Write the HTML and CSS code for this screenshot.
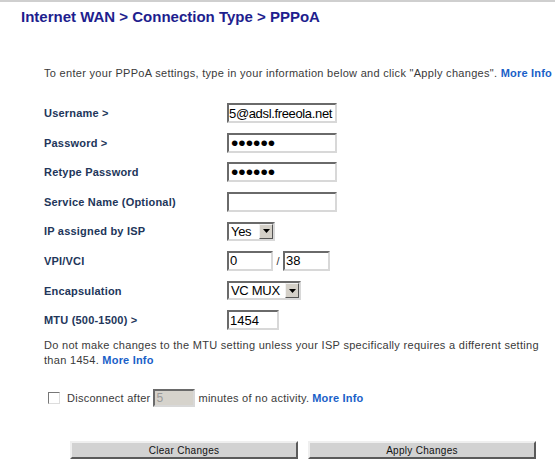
FILE: index.html
```html
<!DOCTYPE html>
<html>
<head>
<meta charset="utf-8">
<title>Internet WAN &gt; Connection Type &gt; PPPoA</title>
<link rel="stylesheet" href="styles.css">
</head>
<body>
<div class="page">
  <h1 class="title">Internet WAN &gt; Connection Type &gt; PPPoA</h1>
  <div class="content">
    <p class="intro">To enter your PPPoA settings, type in your information below and click "Apply changes". <a class="more" href="#">More Info</a></p>
    <div class="form">
      <label class="lbl">Username &gt;</label>
      <div class="ctl"><input class="field w110 user" type="text" value="5@adsl.freeola.net"></div>

      <label class="lbl">Password &gt;</label>
      <div class="ctl"><input class="field w110 pw" type="password" value="secret"></div>

      <label class="lbl">Retype Password</label>
      <div class="ctl"><input class="field w110 pw" type="password" value="secret"></div>

      <label class="lbl">Service Name (Optional)</label>
      <div class="ctl"><input class="field w110" type="text" value=""></div>

      <label class="lbl">IP assigned by ISP</label>
      <div class="ctl">
        <span class="sel w48"><span class="sel-text">Yes</span><span class="sel-btn"><svg width="7" height="4" viewBox="0 0 7 4"><path d="M0 0H7L3.5 4Z" fill="#000"/></svg></span></span>
      </div>

      <label class="lbl">VPI/VCI</label>
      <div class="ctl">
        <input class="field w46" type="text" value="0"><span class="slash">/</span><input class="field w47" type="text" value="38">
      </div>

      <label class="lbl">Encapsulation</label>
      <div class="ctl">
        <span class="sel w74"><span class="sel-text">VC MUX</span><span class="sel-btn"><svg width="7" height="4" viewBox="0 0 7 4"><path d="M0 0H7L3.5 4Z" fill="#000"/></svg></span></span>
      </div>

      <label class="lbl">MTU (500-1500) &gt;</label>
      <div class="ctl"><input class="field w52" type="text" value="1454"></div>
    </div>

    <p class="note">Do not make changes to the MTU setting unless your ISP specifically requires a different setting than 1454. <a class="more" href="#">More Info</a></p>

    <div class="idle">
      <input class="chk" type="checkbox">
      <span>Disconnect after</span>
      <input class="field w42 dis" type="text" value="5" disabled>
      <span>minutes of no activity.</span>
      <a class="more" href="#">More Info</a>
    </div>

    <div class="buttons">
      <button class="btn" type="button">Clear Changes</button>
      <button class="btn" type="button">Apply Changes</button>
    </div>
  </div>
</div>
</body>
</html>
```

FILE: styles.css
```css
html, body {
  margin: 0;
  padding: 0;
  background: #fff;
}

body {
  font-family: "Liberation Sans", Arial, sans-serif;
  color: #3a3a3a;
}

.page {
  border-top: 2px solid #cfcfcf;
  width: 555px;
  height: 470px;
  overflow: hidden;
}

.title {
  margin: 0;
  padding: 6px 0 0 21px;
  font-size: 15px;
  line-height: 18px;
  font-weight: bold;
  color: #1e1e8e;
}

.content {
  padding-left: 44px;
  width: 508px;
}

.intro {
  margin: 40px 0 0 0;
  font-size: 11px;
  line-height: 14px;
  letter-spacing: 0.3px;
  white-space: nowrap;
}

.more {
  color: #1a5fc8;
  font-weight: bold;
  text-decoration: none;
  letter-spacing: 0.2px;
}

.form {
  display: grid;
  grid-template-columns: 183px auto;
  grid-auto-rows: 20px;
  row-gap: 9.6px;
  align-items: center;
  margin-top: 23px;
}

.lbl {
  font-size: 11px;
  font-weight: bold;
  letter-spacing: 0.2px;
  color: #22365a;
}

.ctl {
  display: flex;
  align-items: center;
  height: 20px;
}

.field {
  box-sizing: border-box;
  height: 20px;
  margin: 0;
  padding: 0 1px;
  border: 2px solid;
  border-color: #6a6a6a #d8d8d8 #d8d8d8 #6a6a6a;
  background: #fff;
  font-family: "Liberation Sans", Arial, sans-serif;
  font-size: 13px;
  color: #000;
  outline: none;
}

.user {
  letter-spacing: -0.35px;
  padding: 0;
}

.pw {
  font-size: 21px;
  line-height: 16px;
  padding: 0 2px;
}

.w110 { width: 110px; }
.w46 { width: 46px; }
.w47 { width: 47px; }
.w52 { width: 52px; }
.w42 { width: 42px; }
.w48 { width: 48px; }
.w74 { width: 74px; }

.slash {
  font-size: 11px;
  color: #333;
  width: 10px;
  text-align: center;
}

.sel {
  box-sizing: border-box;
  display: inline-flex;
  align-items: stretch;
  height: 19px;
  border: 2px solid;
  border-color: #6a6a6a #d8d8d8 #d8d8d8 #6a6a6a;
  background: #fff;
}

.sel-text {
  flex: 1;
  font-size: 13px;
  line-height: 15px;
  color: #000;
  padding-left: 2px;
  letter-spacing: -0.3px;
}

.sel-btn {
  box-sizing: border-box;
  width: 14px;
  display: flex;
  align-items: center;
  justify-content: center;
  background: #d4d0c8;
  border: 1px solid;
  border-color: #f2f2f2 #555 #555 #f2f2f2;
}

.note {
  margin: 8px 0 0 0;
  font-size: 11px;
  line-height: 15px;
  letter-spacing: 0.3px;
}

.idle {
  display: flex;
  align-items: center;
  margin-top: 21px;
  padding-left: 4px;
  font-size: 11px;
  letter-spacing: 0.25px;
  height: 18px;
}

.chk {
  box-sizing: border-box;
  appearance: none;
  width: 12px;
  height: 12px;
  margin: 0 7px 0 0;
  border: 1px solid;
  border-color: #777 #ddd #ddd #777;
  background: #fff;
}

.idle .field {
  height: 18px;
  margin: 0 3px 0 3px;
  letter-spacing: 0;
}

.dis {
  background: #d6d3cc;
  color: #9a9a9a;
  font-size: 12px;
}

.idle .more {
  margin-left: 3px;
}

.buttons {
  display: flex;
  gap: 10px;
  margin-top: 34px;
  padding-left: 26px;
}

.btn {
  box-sizing: border-box;
  width: 228px;
  height: 18px;
  margin: 0;
  padding: 0;
  background: #d2d2d2;
  border: 2px solid;
  border-color: #efefef #5a5a5a #5a5a5a #efefef;
  font-family: "Liberation Sans", Arial, sans-serif;
  font-size: 10px;
  letter-spacing: 0.3px;
  color: #111;
}
```
